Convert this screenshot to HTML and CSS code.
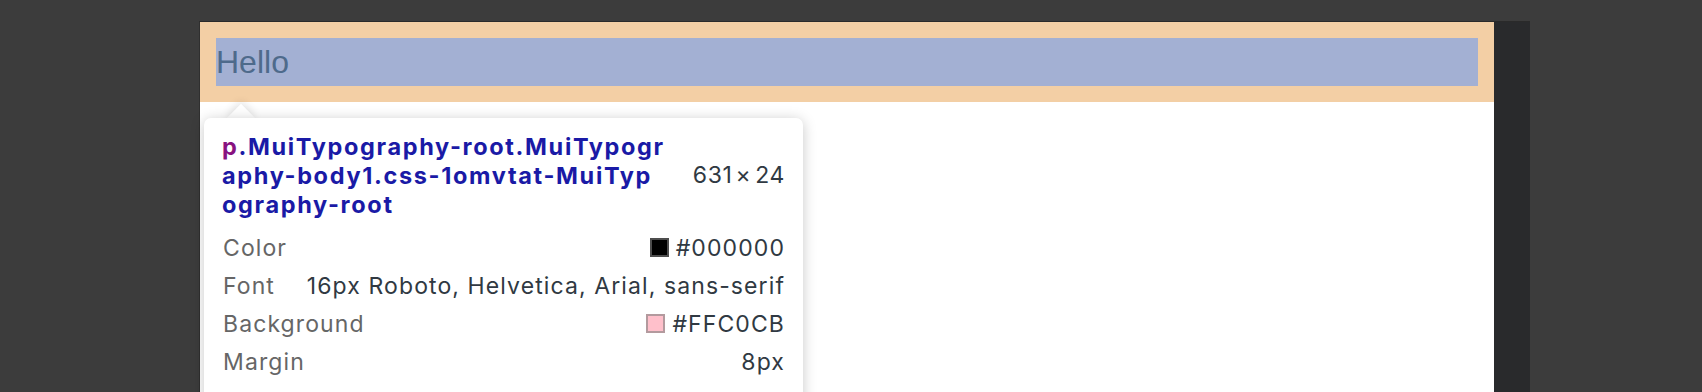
FILE: index.html
```html
<!DOCTYPE html>
<html>
<head>
<meta charset="utf-8">
<link rel="stylesheet" href="styles.css">
</head>
<body>
<div class="stage">
  <div class="frame">
    <div class="page">
      <div class="margin-box">
        <p class="hello">Hello</p>
      </div>
    </div>
    <div class="gutter"></div>
  </div>
  <div class="tooltip">
    <div class="arrow"></div>
    <div class="tip-body">
      <div class="tip-head">
        <div class="selector"><span class="tag">p</span>.MuiTypography-root.MuiTypogr<br>aphy-body1.css-1omvtat-MuiTyp<br>ography-root</div>
        <div class="dims">631<span class="times">×</span>24</div>
      </div>
      <div class="rows">
        <div class="row"><span class="label">Color</span><span class="value"><span class="swatch swatch-black"></span>#000000</span></div>
        <div class="row"><span class="label">Font</span><span class="value">16px Roboto, Helvetica, Arial, sans-serif</span></div>
        <div class="row"><span class="label">Background</span><span class="value"><span class="swatch swatch-pink"></span>#FFC0CB</span></div>
        <div class="row"><span class="label">Margin</span><span class="value">8px</span></div>
      </div>
    </div>
  </div>
</div>
</body>
</html>
```
FILE: styles.css
```css
html, body {
  margin: 0;
  padding: 0;
  height: 100%;
  overflow: hidden;
  background: #3c3c3c;
}

.stage {
  position: relative;
  height: 392px;
  padding-top: 21px;
  padding-left: 199px;
  box-sizing: border-box;
}

.frame {
  display: flex;
  height: 371px;
  width: 1331px;
  border-top: 1px solid #2a2a2a;
  border-left: 1px solid #2f2f2f;
  box-sizing: border-box;
}

.page {
  width: 1294px;
  background: #ffffff;
}

.gutter {
  width: 36px;
  background: #292a2c;
}

.margin-box {
  background: #f3cfa5;
  padding: 16px;
}

.hello {
  margin: 0;
  height: 48px;
  line-height: 48px;
  background: #a3b0d3;
  color: #4e6a8b;
  font-family: "Liberation Sans", Arial, sans-serif;
  font-size: 32px;
}

.tooltip {
  position: absolute;
  left: 204px;
  top: 118px;
  width: 599px;
  height: 300px;
}

.arrow {
  position: absolute;
  left: 27px;
  top: -10px;
  width: 20px;
  height: 20px;
  background: #ffffff;
  transform: rotate(45deg);
  box-shadow: -2px -2px 8px rgba(0, 0, 0, 0.12);
}

.tip-body {
  position: relative;
  height: 100%;
  background: #ffffff;
  border-radius: 7px;
  box-shadow: 0 2px 14px rgba(0, 0, 0, 0.22);
  padding: 14px 19px 0 19px;
  box-sizing: border-box;
  font-family: Inter, "Noto Sans", sans-serif;
  font-size: 23px;
  letter-spacing: 1.1px;
}

.tip-head {
  display: flex;
  align-items: center;
  justify-content: space-between;
}

.selector {
  font-weight: 700;
  line-height: 29px;
  color: #1a1aa6;
  font-size: 23.5px;
  letter-spacing: 1.65px;
  margin-left: -1px;
}

.tag {
  color: #881280;
}

.dims {
  color: #303942;
  line-height: 29px;
  letter-spacing: 0.6px;
  margin-right: -1px;
}

.times {
  margin: 0 4px 0 3px;
}

.rows {
  margin-top: 10px;
}

.row {
  display: flex;
  justify-content: space-between;
  gap: 28px;
  line-height: 38px;
}

.label {
  color: #666666;
}

.value {
  color: #303942;
  display: flex;
  align-items: center;
  margin-right: -1px;
}

.swatch {
  display: inline-block;
  width: 19px;
  height: 19px;
  box-sizing: border-box;
  border: 2px solid rgba(128, 128, 128, 0.6);
  margin-right: 7px;
  margin-top: -2px;
}

.swatch-black {
  background: #000000;
}

.swatch-pink {
  background: #ffc0cb;
}
```
